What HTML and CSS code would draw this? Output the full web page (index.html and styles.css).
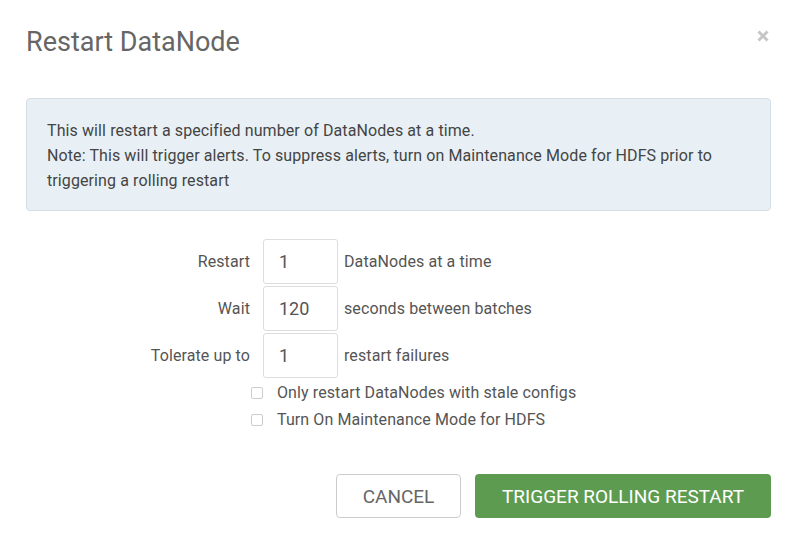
FILE: index.html
```html
<!DOCTYPE html>
<html lang="en">
<head>
  <meta charset="UTF-8" />
  <meta name="viewport" content="width=device-width, initial-scale=1.0"/>
  <title>Restart DataNode</title>
  <link rel="stylesheet" href="styles.css">
</head>
<body>
  <div class="modal">
    <header class="modal-header">
      <h1>Restart DataNode</h1>
      <svg class="close" width="12" height="12" viewBox="0 0 12 12">
        <path d="M1.5 1.5 L10.5 10.5 M10.5 1.5 L1.5 10.5" stroke="#c6c6c6" stroke-width="3" />
      </svg>
    </header>

    <div class="info">
      <p>This will restart a specified number of DataNodes at a time.</p>
      <p>Note: This will trigger alerts. To suppress alerts, turn on Maintenance Mode for HDFS prior to triggering a rolling restart</p>
    </div>

    <form class="restart-form">
      <label>Restart</label>
      <input type="text" value="1" />
      <span class="hint">DataNodes at a time</span>

      <label>Wait</label>
      <input type="text" value="120" />
      <span class="hint">seconds between batches</span>

      <label>Tolerate up to</label>
      <input type="text" value="1" />
      <span class="hint">restart failures</span>

      <div class="checks">
        <label class="check"><span class="box"></span>Only restart DataNodes with stale configs</label>
        <label class="check"><span class="box"></span>Turn On Maintenance Mode for HDFS</label>
      </div>
    </form>

    <footer class="modal-footer">
      <button class="btn btn-cancel">Cancel</button>
      <button class="btn btn-primary">Trigger Rolling Restart</button>
    </footer>
  </div>
</body>
</html>
```

FILE: styles.css
```css
body {
  margin: 0;
  padding: 0;
  background: white;
  font-family: Roboto, 'Liberation Sans', sans-serif;
  color: #555;
}
.modal {
  width: 796px;
  height: 544px;
  box-sizing: border-box;
  padding: 0 25px 0 26px;
}
.modal-header {
  display: flex;
  justify-content: space-between;
  align-items: center;
  padding-top: 22px;
  height: 40px;
  margin-bottom: 36px;
}
.modal-header h1 {
  margin: 0;
  font-size: 27px;
  font-weight: 400;
  color: #666;
  line-height: 40px;
}
.close {
  margin-right: 2px;
  margin-top: -12px;
}
.info {
  background: #e8f0f5;
  border: 1px solid #d3dee6;
  border-radius: 4px;
  padding: 19px 20px 17px 20px;
  font-size: 16px;
  letter-spacing: 0.1px;
  line-height: 25px;
  color: #444;
}
.info p {
  margin: 0;
}
.restart-form {
  display: grid;
  grid-template-columns: 237px 75px auto;
  row-gap: 2px;
  margin-top: 28px;
  align-items: center;
  font-size: 16px;
  letter-spacing: 0.1px;
}
.restart-form > label {
  text-align: right;
  padding-right: 13px;
  color: #555;
}
.restart-form input {
  box-sizing: border-box;
  width: 75px;
  height: 45px;
  border: 1px solid #ddd;
  border-radius: 3px;
  padding: 0 15px;
  font-family: inherit;
  font-size: 18px;
  color: #555;
}
.hint {
  padding-left: 6px;
  color: #555;
}
.checks {
  grid-column: 1 / 4;
  padding-left: 225px;
  margin-top: -1px;
}
.check {
  display: flex;
  align-items: center;
  height: 27px;
  color: #555;
}
.box {
  width: 10px;
  height: 10px;
  border: 1px solid #ccc;
  border-radius: 2px;
  margin-right: 14px;
}
.modal-footer {
  display: flex;
  justify-content: flex-end;
  gap: 14px;
  margin-top: 41px;
}
.btn {
  height: 44px;
  border-radius: 4px;
  font-family: inherit;
  font-size: 19px;
  text-transform: uppercase;
  cursor: pointer;
}
.btn-cancel {
  width: 125px;
  background: white;
  border: 1px solid #ccc;
  color: #666;
}
.btn-primary {
  width: 296px;
  background: #5d9c50;
  border: none;
  color: white;
}
```
